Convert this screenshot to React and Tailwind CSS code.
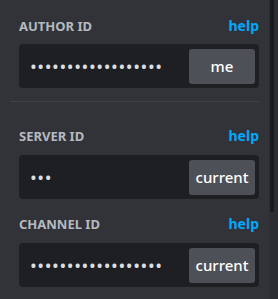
const fields = [
  { label: 'AUTHOR ID', dots: 18, action: 'me' },
  { label: 'SERVER ID', dots: 3, action: 'current' },
  { label: 'CHANNEL ID', dots: 18, action: 'current' },
];

function Field({ label, dots, action, labelGap }) {
  return (
    <div>
      <div className="flex h-4 items-end justify-between">
        <span className="text-[13px] font-bold leading-4 text-[#b5bac1]">{label}</span>
        <span className="text-[14px] font-bold leading-4 text-[#00a8fc]">help</span>
      </div>
      <div className={`${labelGap} flex h-[44px] items-center justify-between rounded-[4px] bg-[#1e1f22] pl-[11px] pr-[4px]`}>
        <span className="text-[18px] leading-none tracking-[0.6px] text-[#dbdee1]">{'•'.repeat(dots)}</span>
        <button className="flex h-[35px] w-[66px] items-center justify-center rounded-[3px] bg-[#4e5058] text-[15px] font-medium text-white">
          {action}
        </button>
      </div>
    </div>
  );
}

export default function App() {
  return (
    <div
      className="flex h-[299px] w-[278px] overflow-hidden bg-[#313338]"
      style={{ fontFamily: '"Noto Sans", "Open Sans", sans-serif' }}
    >
      <div className="flex-1 pl-[19px] pr-[10px] pt-[18px]">
        <Field {...fields[0]} labelGap="mt-[10px]" />
        <div className="-ml-[9px] mt-[13px] h-px bg-[#3f4147]" />
        <div className="mt-[26px]">
          <Field {...fields[1]} labelGap="mt-[11px]" />
        </div>
        <div className="mt-[17px]">
          <Field {...fields[2]} labelGap="mt-[11px]" />
        </div>
      </div>
      <div className="w-[9px] bg-[#2b2d31] pl-[1px]">
        <div className="h-[212px] w-[4px] rounded-b-full bg-[#1a1b1e]" />
      </div>
    </div>
  );
}
